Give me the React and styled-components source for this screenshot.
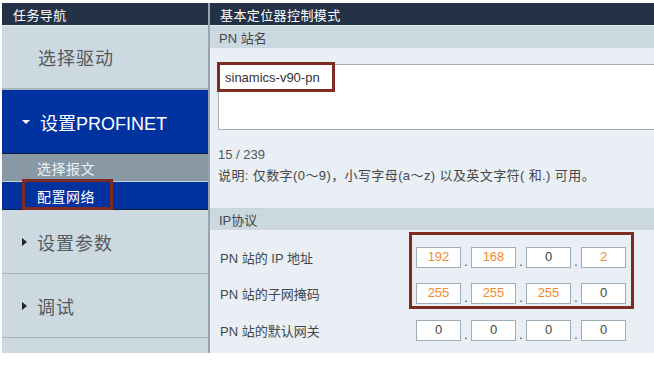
import React from 'react';
import styled, { createGlobalStyle } from 'styled-components';

const GlobalStyle = createGlobalStyle`
  html, body {
    margin: 0;
    padding: 0;
    background: #ffffff;
  }
  body {
    font-family: "Liberation Sans", "Noto Sans CJK SC", sans-serif;
  }
`;

const Page = styled.div`
  width: 654px;
  height: 366px;
  padding-top: 3px;
  padding-left: 2px;
  box-sizing: border-box;
  display: flex;
  align-items: flex-start;
  overflow: hidden;
  background: #ffffff;
`;

const Sidebar = styled.div`
  width: 206px;
  height: 350px;
  display: flex;
  flex-direction: column;
  background: #ccd9e1;
  border-right: 2px solid #98a6b1;
`;

const Header = styled.div`
  height: 22px;
  flex: none;
  display: flex;
  align-items: center;
  padding-left: ${(p) => p.indent || 11}px;
  background: #243248;
  color: #ffffff;
  font-size: 13px;
  letter-spacing: 0.4px;
  border-bottom: 1px solid #e6ecf0;
`;

const NavItem = styled.div`
  height: ${(p) => p.h || 63}px;
  flex: none;
  display: flex;
  align-items: center;
  padding-left: ${(p) => (p.arrow ? 20 : 36)}px;
  background: ${(p) => (p.active ? '#0032a0' : '#ccd9e1')};
  color: ${(p) => (p.active ? '#ffffff' : '#555a5e')};
  font-size: 18px;
  letter-spacing: ${(p) => (p.tight ? 0 : 1)}px;
  border-bottom: ${(p) => (p.active ? '1px solid #10203a' : '1px solid #a6b4be')};
`;

const Arrow = styled.span`
  width: 0;
  height: 0;
  margin-right: 10px;
  ${(p) =>
    p.down
      ? `border-left: 4px solid transparent;
         border-right: 4px solid transparent;
         border-top: 4px solid #ffffff;`
      : `border-top: 4px solid transparent;
         border-bottom: 4px solid transparent;
         border-left: 5px solid #222;`}
`;

const SubItem = styled.div`
  height: 27px;
  flex: none;
  display: flex;
  align-items: center;
  padding-left: 35px;
  position: relative;
  background: ${(p) => (p.active ? '#0032a0' : '#8898a5')};
  color: ${(p) => (p.active ? '#ffffff' : '#eef2f5')};
  font-size: 14px;
  letter-spacing: 0.5px;
  border-bottom: 1px solid ${(p) => (p.active ? '#10203a' : '#c4cfd7')};
`;

const Highlight = styled.div`
  position: absolute;
  border: 3px solid #7e2b22;
  box-sizing: border-box;
  pointer-events: none;
`;

const Main = styled.div`
  flex: 1;
  height: 350px;
  display: flex;
  flex-direction: column;
  background: #e9eff4;
  overflow: hidden;
`;

const SectionTitle = styled.div`
  height: 22px;
  flex: none;
  display: flex;
  align-items: center;
  padding-left: 9px;
  background: #cbd8e0;
  color: #44474a;
  font-size: 13px;
`;

const SectionBody = styled.div`
  position: relative;
  flex: none;
  padding: ${(p) => p.pad};
  height: ${(p) => p.h}px;
  box-sizing: border-box;
  border-bottom: ${(p) => (p.line ? '1px solid #c7d3db' : 'none')};
`;

const NameInput = styled.div`
  width: 460px;
  height: 66px;
  box-sizing: border-box;
  background: #ffffff;
  border: 1px solid #a3b0ba;
  border-right: none;
  padding: 5px 0 0 6px;
  color: #333;
  font-size: 13px;
`;

const Counter = styled.div`
  margin-top: 17px;
  color: #555;
  font-size: 13px;
`;

const Hint = styled.div`
  margin-top: 3px;
  color: #44474a;
  font-size: 13px;
  letter-spacing: 0.4px;
`;

const Row = styled.div`
  display: flex;
  align-items: center;
  height: 21px;
  margin-bottom: ${(p) => p.gap || 0}px;
`;

const Label = styled.div`
  width: 196px;
  color: #44474a;
  font-size: 13px;
`;

const Octet = styled.div`
  width: 45px;
  height: 21px;
  box-sizing: border-box;
  background: #ffffff;
  border: 1px solid #9fadb8;
  display: flex;
  justify-content: center;
  align-items: center;
  padding-bottom: 3px;
  color: ${(p) => (p.orange ? '#f28a2a' : '#444')};
  font-size: 13px;
`;

const Dot = styled.span`
  width: 10px;
  text-align: center;
  align-self: flex-end;
  color: #333;
  font-size: 12px;
  line-height: 12px;
`;

const IpField = ({ values, orange }) => (
  <>
    {values.map((v, i) => (
      <React.Fragment key={i}>
        {i > 0 && <Dot>.</Dot>}
        <Octet orange={orange && v !== '0'}>{v}</Octet>
      </React.Fragment>
    ))}
  </>
);

const App = () => (
  <Page>
    <GlobalStyle />
    <Sidebar>
      <Header>任务导航</Header>
      <NavItem h={62} style={{ borderBottomWidth: 2 }}>选择驱动</NavItem>
      <NavItem active arrow tight>
        <Arrow down />
        设置PROFINET
      </NavItem>
      <SubItem>选择报文</SubItem>
      <SubItem active>
        配置网络
        <Highlight style={{ left: 20, top: -3, width: 91, height: 31 }} />
      </SubItem>
      <NavItem arrow>
        <Arrow />
        设置参数
      </NavItem>
      <NavItem arrow>
        <Arrow />
        调试
      </NavItem>
    </Sidebar>
    <Main>
      <Header indent={10}>基本定位器控制模式</Header>
      <SectionTitle>PN 站名</SectionTitle>
      <SectionBody pad="16px 0 0 8px" h={161} line>
        <NameInput>sinamics-v90-pn</NameInput>
        <Highlight style={{ left: 7, top: 14, width: 118, height: 30 }} />
        <Counter>15 / 239</Counter>
        <Hint>说明: 仅数字(0～9)，小写字母(a～z) 以及英文字符( 和.) 可用。</Hint>
      </SectionBody>
      <SectionTitle style={{ height: 21 }}>IP协议</SectionTitle>
      <SectionBody pad="17px 0 0 10px" h={123}>
        <Row gap={15}>
          <Label>PN 站的 IP 地址</Label>
          <IpField values={['192', '168', '0', '2']} orange />
        </Row>
        <Row gap={16}>
          <Label>PN 站的子网掩码</Label>
          <IpField values={['255', '255', '255', '0']} orange />
        </Row>
        <Row>
          <Label>PN 站的默认网关</Label>
          <IpField values={['0', '0', '0', '0']} />
        </Row>
        <Highlight style={{ left: 199, top: 2, width: 225, height: 77 }} />
      </SectionBody>
    </Main>
  </Page>
);

export default App;
